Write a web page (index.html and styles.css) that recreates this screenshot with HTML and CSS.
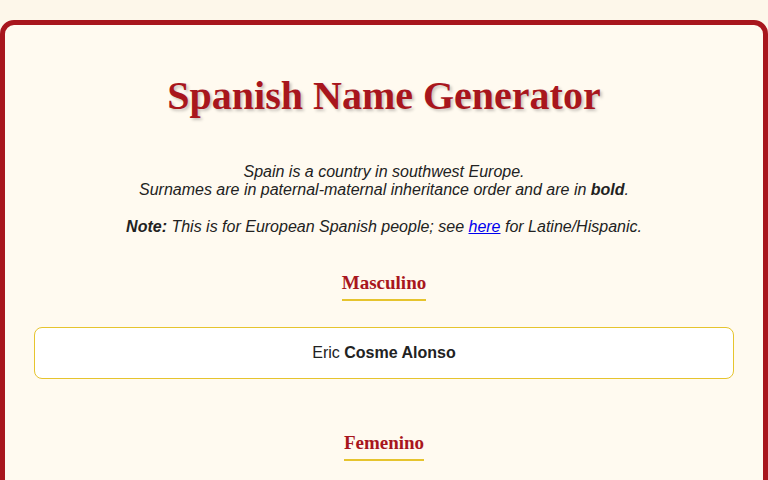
FILE: index.html
```html
<!DOCTYPE html>
<html>
<head>
<meta charset="utf-8">
<link rel="stylesheet" href="styles.css">
</head>
<body>
<div class="page">
  <h1 class="title">Spanish Name Generator</h1>
  <p class="intro">Spain is a country in southwest Europe.<br>Surnames are in paternal-maternal inheritance order and are in <b>bold</b>.</p>
  <p class="intro"><b>Note:</b> This is for European Spanish people; see <a href="#">here</a> for Latine/Hispanic.</p>
  <section class="group">
    <h2 class="group-title">Masculino</h2>
    <div class="name-box">Eric <b>Cosme Alonso</b></div>
  </section>
  <section class="group">
    <h2 class="group-title">Femenino</h2>
  </section>
</div>
</body>
</html>
```
FILE: styles.css
```css
html, body {
  margin: 0;
  padding: 0;
  background: #fdf7ea;
}
body {
  padding-top: 20px;
  font-family: "Liberation Sans", Arial, sans-serif;
  color: #222;
  font-size: 16px;
}
.page {
  background: #fffaf0;
  border: 5px solid #a8161d;
  border-radius: 14px;
  padding: 20px 29px 40px;
  text-align: center;
  min-height: 500px;
}
.title {
  font-family: "Liberation Serif", "Times New Roman", serif;
  font-weight: bold;
  font-size: 40px;
  line-height: 46px;
  color: #a8161d;
  text-shadow: 2px 2px 3px rgba(0,0,0,0.22);
  margin: 28px 0 44px;
}
.intro {
  font-style: italic;
  line-height: 18px;
  margin: 0 0 19px;
}
.intro a {
  color: #0000ee;
}
.group {
  margin-top: 36px;
}
.group + .group {
  margin-top: 53px;
}
.group-title {
  display: inline-block;
  font-family: "Liberation Serif", "Times New Roman", serif;
  font-weight: bold;
  font-size: 19px;
  line-height: 22px;
  color: #a8161d;
  margin: 0;
  padding-bottom: 5px;
  border-bottom: 2px solid #e6c42e;
}
.name-box {
  margin-top: 26px;
  background: #ffffff;
  border: 1px solid #e6c42e;
  border-radius: 8px;
  padding: 16px;
  line-height: 18px;
}
```
